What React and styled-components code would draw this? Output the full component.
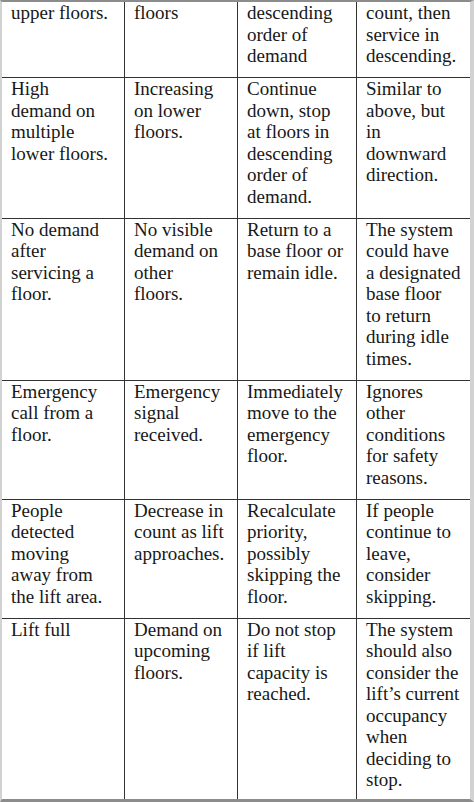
import React from "react";
import styled, { createGlobalStyle } from "styled-components";

const Global = createGlobalStyle`
  html, body { margin: 0; padding: 0; background: #fff; }
  body { font-family: "Liberation Serif", "Times New Roman", serif; }
`;

const Frame = styled.div`
  box-sizing: border-box;
  width: 474px;
  height: 802px;
  overflow: hidden;
  border-top: 2px solid #8c8c8c;
  border-bottom: 3px solid #8c8c8c;
  border-left: 2px solid #d2d2d2;
  border-right: 4px solid #d2d2d2;
  background: #fff;
`;

const Table = styled.div`
  display: grid;
  height: 100%;
  grid-template-columns: 122px 113px 119px 1fr;
  grid-template-rows: repeat(5, auto) 1fr;
`;

const Cell = styled.div`
  box-sizing: border-box;
  padding: 0 4px 10.5px 9px;
  border-left: ${(p) => (p.$col === 0 ? "none" : "1px solid #333")};
  border-top: ${(p) => (p.$first ? "none" : "1px solid #333")};
  font-size: 19px;
  line-height: 21.5px;
  color: #181818;
  white-space: nowrap;
`;

const rows = [
  [
    ["upper floors."],
    ["floors"],
    ["descending", "order of", "demand"],
    ["count, then", "service in", "descending."],
  ],
  [
    ["High", "demand on", "multiple", "lower floors."],
    ["Increasing", "on lower", "floors."],
    ["Continue", "down, stop", "at floors in", "descending", "order of", "demand."],
    ["Similar to", "above, but", "in", "downward", "direction."],
  ],
  [
    ["No demand", "after", "servicing a", "floor."],
    ["No visible", "demand on", "other", "floors."],
    ["Return to a", "base floor or", "remain idle."],
    ["The system", "could have", "a designated", "base floor", "to return", "during idle", "times."],
  ],
  [
    ["Emergency", "call from a", "floor."],
    ["Emergency", "signal", "received."],
    ["Immediately", "move to the", "emergency", "floor."],
    ["Ignores", "other", "conditions", "for safety", "reasons."],
  ],
  [
    ["People", "detected", "moving", "away from", "the lift area."],
    ["Decrease in", "count as lift", "approaches."],
    ["Recalculate", "priority,", "possibly", "skipping the", "floor."],
    ["If people", "continue to", "leave,", "consider", "skipping."],
  ],
  [
    ["Lift full"],
    ["Demand on", "upcoming", "floors."],
    ["Do not stop", "if lift", "capacity is", "reached."],
    ["The system", "should also", "consider the", "lift\u2019s current", "occupancy", "when", "deciding to", "stop."],
  ],
];

export default function App() {
  return (
    <>
      <Global />
      <Frame>
        <Table>
          {rows.map((row, r) =>
            row.map((lines, c) => (
              <Cell key={`${r}-${c}`} $col={c} $first={r === 0}>
                {lines.map((l, i) => (
                  <React.Fragment key={i}>
                    {i > 0 && <br />}
                    {l}
                  </React.Fragment>
                ))}
              </Cell>
            ))
          )}
        </Table>
      </Frame>
    </>
  );
}
